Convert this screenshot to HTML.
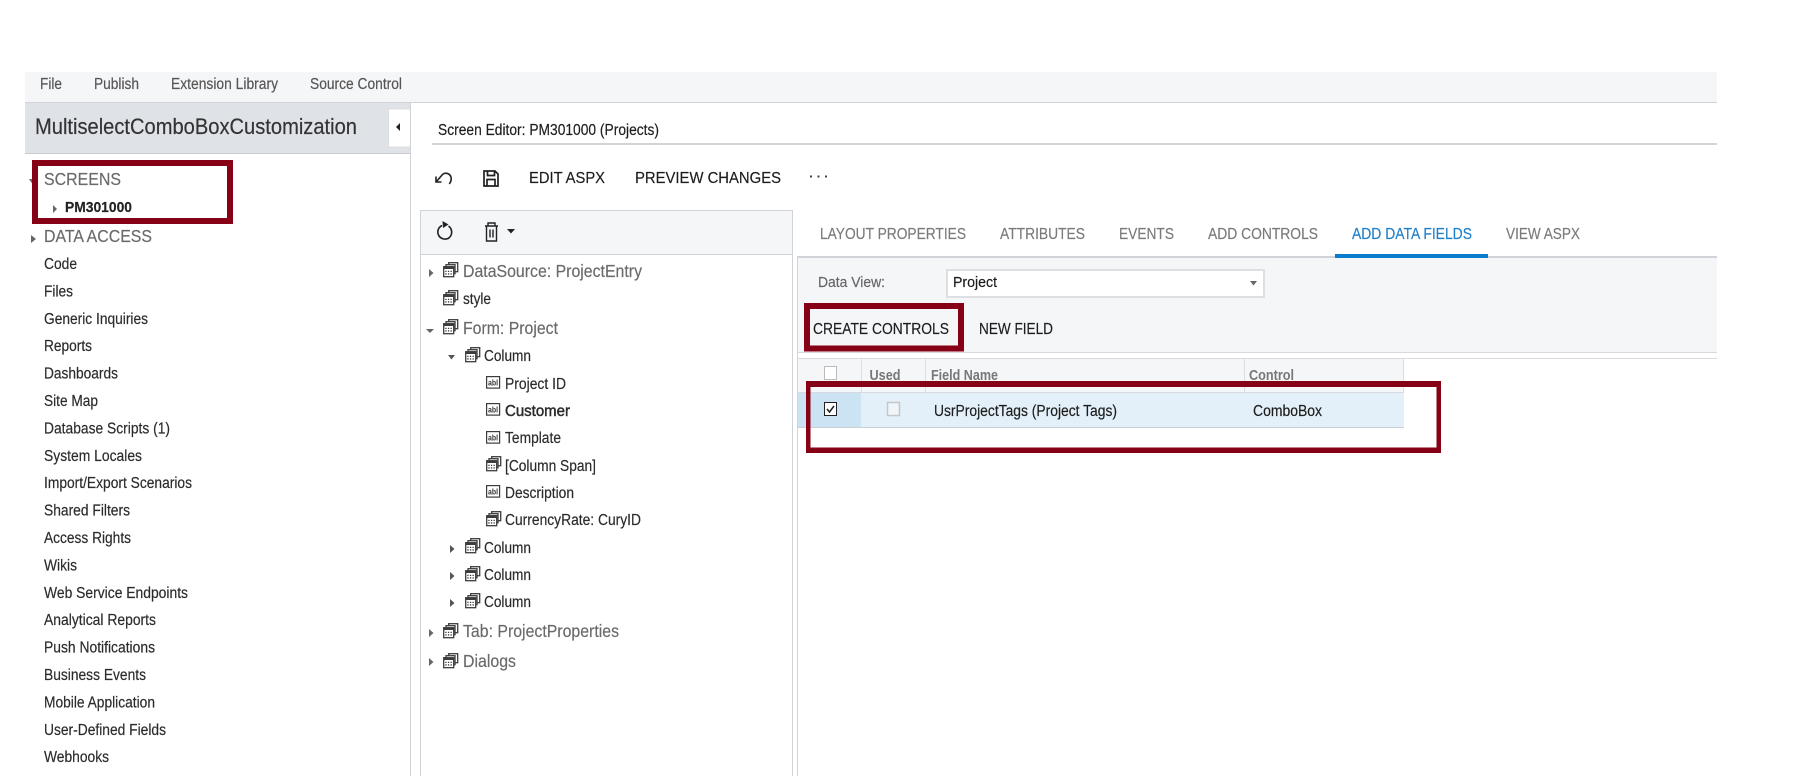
<!DOCTYPE html>
<html lang="en">
<head>
<meta charset="utf-8">
<title>Screen Editor</title>
<style>
html,body{margin:0;padding:0;background:#fff;width:1798px;height:776px;overflow:hidden}
svg{display:block}
text{font-family:"Liberation Sans",sans-serif;font-size:15.5px;color:#2b2b2b;fill:currentColor;stroke:currentColor;stroke-width:.18px}
.m{color:#555}
.g{color:#6a6a6a;font-size:17.5px}
.t{color:#7a7a7a;font-size:16px;transform:translateY(-1px)}
.h{color:#777;font-size:14.500px;font-weight:bold;stroke-width:0}
.d{color:#1d1d1d}
.i{stroke:#3c3c3c;fill:#fff;stroke-width:1.300}
</style>
</head>
<body>
<svg width="1798" height="776" viewBox="0 0 1798 776" xmlns="http://www.w3.org/2000/svg">
<defs>
<g id="st">
<rect class="i" x="5.700" y="0.700" width="9" height="9"/>
<rect class="i" x="3" y="2.700" width="9" height="9"/>
<rect class="i" x="0.700" y="4.700" width="10" height="10"/>
<path d="M0.500 4.500h10.500v2.500h-10.500z" fill="#3c3c3c"/>
<path d="M2.300 8.700h1.300v1.300h-1.300zM4.900 8.700h1.300v1.300h-1.300zM7.500 8.700h1.300v1.300h-1.300zM2.300 11.300h1.300v1.300h-1.300zM4.900 11.300h1.300v1.300h-1.300zM7.500 11.300h1.300v1.300h-1.300z" fill="#3c3c3c"/>
</g>
<g id="ab">
<rect x="0.600" y="0.600" width="13" height="11.500" fill="#fff" stroke="#3c3c3c" stroke-width="1.200"/>
<text x="2" y="9.500" textLength="10" lengthAdjust="spacingAndGlyphs" style="font-size:8.500px;font-weight:bold;color:#333;stroke-width:0">abl</text>
</g>
</defs>

<!-- Top menu -->
<rect x="25" y="72" width="1692" height="30" fill="#f5f6f8"/>
<rect x="25" y="102" width="1692" height="1" fill="#d2d3d8"/>
<text class="m" x="40" y="89" textLength="22" lengthAdjust="spacingAndGlyphs">File</text>
<text class="m" x="94" y="89" textLength="45" lengthAdjust="spacingAndGlyphs">Publish</text>
<text class="m" x="171" y="89" textLength="107" lengthAdjust="spacingAndGlyphs">Extension Library</text>
<text class="m" x="310" y="89" textLength="92" lengthAdjust="spacingAndGlyphs">Source Control</text>

<!-- Sidebar header -->
<rect x="25" y="103" width="385" height="50" fill="#dfe3e7"/>
<rect x="25" y="153" width="385" height="1" fill="#c8cbd0"/>
<text x="35" y="134" textLength="322" lengthAdjust="spacingAndGlyphs" style="font-size:22.500px;color:#333">MultiselectComboBoxCustomization</text>
<rect x="388.500" y="109" width="22" height="38" fill="#fff" stroke="#dcdde2"/>
<path d="M400 123v8l-4-4z" fill="#222"/>

<!-- Vertical dividers -->
<rect x="410" y="103" width="1" height="673" fill="#d2d3d8"/>
<rect x="420" y="210" width="1" height="566" fill="#d2d3d8"/>
<rect x="792" y="210" width="1" height="566" fill="#d2d3d8"/>
<rect x="797" y="257" width="1" height="519" fill="#d2d3d8"/>

<!-- Sidebar tree -->
<path d="M29 179h7l-3.500 5z" fill="#666"/>
<text x="44" y="185" textLength="77" lengthAdjust="spacingAndGlyphs" class="g">SCREENS</text>
<path d="M53 205l4 4-4 4z" fill="#666"/>
<text x="65" y="212" textLength="67" lengthAdjust="spacingAndGlyphs" style="font-weight:bold;color:#222;font-size:15px">PM301000</text>
<path d="M31 235l5 4-5 4z" fill="#666"/>
<text x="44" y="242" textLength="108" lengthAdjust="spacingAndGlyphs" class="g">DATA ACCESS</text>
<text x="44" y="269" textLength="33" lengthAdjust="spacingAndGlyphs">Code</text>
<text x="44" y="296.500" textLength="29" lengthAdjust="spacingAndGlyphs">Files</text>
<text x="44" y="324" textLength="104" lengthAdjust="spacingAndGlyphs">Generic Inquiries</text>
<text x="44" y="351.200" textLength="48" lengthAdjust="spacingAndGlyphs">Reports</text>
<text x="44" y="378.600" textLength="74" lengthAdjust="spacingAndGlyphs">Dashboards</text>
<text x="44" y="406" textLength="54" lengthAdjust="spacingAndGlyphs">Site Map</text>
<text x="44" y="433.400" textLength="126" lengthAdjust="spacingAndGlyphs">Database Scripts (1)</text>
<text x="44" y="460.800" textLength="98" lengthAdjust="spacingAndGlyphs">System Locales</text>
<text x="44" y="488.200" textLength="148" lengthAdjust="spacingAndGlyphs">Import/Export Scenarios</text>
<text x="44" y="515.600" textLength="86" lengthAdjust="spacingAndGlyphs">Shared Filters</text>
<text x="44" y="543" textLength="87" lengthAdjust="spacingAndGlyphs">Access Rights</text>
<text x="44" y="570.400" textLength="33" lengthAdjust="spacingAndGlyphs">Wikis</text>
<text x="44" y="597.800" textLength="144" lengthAdjust="spacingAndGlyphs">Web Service Endpoints</text>
<text x="44" y="625.200" textLength="112" lengthAdjust="spacingAndGlyphs">Analytical Reports</text>
<text x="44" y="652.600" textLength="111" lengthAdjust="spacingAndGlyphs">Push Notifications</text>
<text x="44" y="680" textLength="102" lengthAdjust="spacingAndGlyphs">Business Events</text>
<text x="44" y="707.400" textLength="111" lengthAdjust="spacingAndGlyphs">Mobile Application</text>
<text x="44" y="734.800" textLength="122" lengthAdjust="spacingAndGlyphs">User-Defined Fields</text>
<text x="44" y="762.200" textLength="65" lengthAdjust="spacingAndGlyphs">Webhooks</text>

<!-- Screen editor header -->
<rect x="432" y="143" width="1285" height="2" fill="#d2d3d8"/>
<text class="d" x="438" y="135" textLength="221" lengthAdjust="spacingAndGlyphs">Screen Editor: PM301000 (Projects)</text>

<!-- Toolbar -->
<path d="M436 176.500v5.500h5.500M436.500 181.500l6-7c3-2.500 7-1 8.300 2 .9 2.500.3 5-1.500 7.500" fill="none" stroke="#222" stroke-width="1.600"/>
<path d="M484 171h11l3 3v12h-14zM487.500 171v4.500h7v-4.500M487 186v-6.500h8v6.500" fill="none" stroke="#222" stroke-width="1.700"/>
<text class="d" x="529" y="183" textLength="76" lengthAdjust="spacingAndGlyphs" style="font-size:16px">EDIT ASPX</text>
<text class="d" x="635" y="183" textLength="146" lengthAdjust="spacingAndGlyphs" style="font-size:16px">PREVIEW CHANGES</text>
<path d="M810 175.500h2v2h-2zM817.500 175.500h2v2h-2zM825 175.500h2v2h-2z" fill="#444"/>

<!-- Tree panel -->
<rect x="420.500" y="210.500" width="372" height="44" fill="#f5f6f8" stroke="#d2d3d8"/>
<path d="M442 225.500c-4 2-5 6-3.500 9.500 1.500 3.500 6 5 9.500 3.500 3.500-2 4.500-6 3-9.500-.6-1.300-1.500-2.300-2.500-3" fill="none" stroke="#222" stroke-width="1.600"/>
<path d="M442.500 221l6 3.500-5.500 3.500z" fill="#222"/>
<path d="M485 226h13M488 226v-3h7v3M486.500 226v15h10v-15M490 229.500v8M493 229.500v8" fill="none" stroke="#222" stroke-width="1.400"/>
<path d="M507 229h8l-4 4.500z" fill="#222"/>

<!-- Tree -->
<path d="M429 269l4.500 4-4.500 4z" fill="#666"/>
<use href="#st" x="443" y="262"/>
<text x="463" y="277" textLength="179" lengthAdjust="spacingAndGlyphs" class="g">DataSource: ProjectEntry</text>
<use href="#st" x="443" y="290"/>
<text x="463" y="304" textLength="28" lengthAdjust="spacingAndGlyphs">style</text>
<path d="M426 329h8l-4 4z" fill="#666"/>
<use href="#st" x="443" y="319"/>
<text x="463" y="334" textLength="95" lengthAdjust="spacingAndGlyphs" class="g">Form: Project</text>
<path d="M448 355h7l-3.500 4.500z" fill="#555"/>
<use href="#st" x="465" y="347"/>
<text x="484" y="361" textLength="47" lengthAdjust="spacingAndGlyphs">Column</text>
<use href="#ab" x="486" y="376"/>
<text x="505" y="389" textLength="61" lengthAdjust="spacingAndGlyphs">Project ID</text>
<use href="#ab" x="486" y="403"/>
<text x="505" y="416" textLength="65" lengthAdjust="spacingAndGlyphs" style="stroke-width:.45px">Customer</text>
<use href="#ab" x="486" y="431"/>
<text x="505" y="443" textLength="56" lengthAdjust="spacingAndGlyphs">Template</text>
<use href="#st" x="486" y="456"/>
<text x="505" y="471" textLength="91" lengthAdjust="spacingAndGlyphs">[Column Span]</text>
<use href="#ab" x="486" y="485"/>
<text x="505" y="498" textLength="69" lengthAdjust="spacingAndGlyphs">Description</text>
<use href="#st" x="486" y="511"/>
<text x="505" y="525" textLength="136" lengthAdjust="spacingAndGlyphs">CurrencyRate: CuryID</text>
<path d="M450 545l4.500 4-4.500 4z" fill="#555"/>
<use href="#st" x="465" y="538"/>
<text x="484" y="553" textLength="47" lengthAdjust="spacingAndGlyphs">Column</text>
<path d="M450 572l4.500 4-4.500 4z" fill="#555"/>
<use href="#st" x="465" y="566"/>
<text x="484" y="580" textLength="47" lengthAdjust="spacingAndGlyphs">Column</text>
<path d="M450 599l4.500 4-4.500 4z" fill="#555"/>
<use href="#st" x="465" y="593"/>
<text x="484" y="607" textLength="47" lengthAdjust="spacingAndGlyphs">Column</text>
<path d="M429 629l4.500 4-4.500 4z" fill="#666"/>
<use href="#st" x="443" y="623"/>
<text x="463" y="637" textLength="156" lengthAdjust="spacingAndGlyphs" class="g">Tab: ProjectProperties</text>
<path d="M429 658l4.500 4-4.500 4z" fill="#666"/>
<use href="#st" x="443" y="653"/>
<text x="463" y="667" textLength="53" lengthAdjust="spacingAndGlyphs" class="g">Dialogs</text>

<!-- Tabs -->
<text class="t" x="820" y="240" textLength="146" lengthAdjust="spacingAndGlyphs">LAYOUT PROPERTIES</text>
<text class="t" x="1000" y="240" textLength="85" lengthAdjust="spacingAndGlyphs">ATTRIBUTES</text>
<text class="t" x="1119" y="240" textLength="55" lengthAdjust="spacingAndGlyphs">EVENTS</text>
<text class="t" x="1208" y="240" textLength="110" lengthAdjust="spacingAndGlyphs">ADD CONTROLS</text>
<text class="t" x="1352" y="240" textLength="120" lengthAdjust="spacingAndGlyphs" style="color:#1f7fc9">ADD DATA FIELDS</text>
<text class="t" x="1506" y="240" textLength="74" lengthAdjust="spacingAndGlyphs">VIEW ASPX</text>

<!-- Form panel -->
<rect x="798" y="258" width="919" height="94" fill="#f5f6f8"/>
<rect x="797" y="256" width="920" height="2" fill="#d2d3d8"/>
<rect x="1335" y="254" width="153" height="4" fill="#0a7acb"/>
<rect x="797" y="352" width="920" height="1" fill="#d8d9dd"/>
<rect x="797" y="358" width="920" height="1" fill="#d8d9dd"/>
<text x="818" y="287" textLength="67" lengthAdjust="spacingAndGlyphs" style="color:#666;font-size:15px">Data View:</text>
<rect x="947" y="270" width="317" height="27" fill="#fff" stroke="#dedfe3" stroke-width="2"/>
<text class="d" x="953" y="287" textLength="44" lengthAdjust="spacingAndGlyphs" style="font-size:15px">Project</text>
<path d="M1250 281h7l-3.500 4.500z" fill="#666"/>

<text class="d" x="813" y="334" textLength="136" lengthAdjust="spacingAndGlyphs" style="font-size:16px">CREATE CONTROLS</text>
<text class="d" x="979" y="334" textLength="74" lengthAdjust="spacingAndGlyphs" style="font-size:16px">NEW FIELD</text>

<!-- Grid -->
<rect x="798" y="359" width="605" height="33" fill="#f5f6f8"/>
<rect x="861" y="359" width="1" height="33" fill="#dcdde1"/>
<rect x="925" y="359" width="1" height="33" fill="#dcdde1"/>
<rect x="1244" y="359" width="1" height="33" fill="#dcdde1"/>
<rect x="1403" y="359" width="1" height="33" fill="#dcdde1"/>
<rect x="798" y="392" width="606" height="1" fill="#d6d9dd"/>
<rect x="824.500" y="366.500" width="12" height="13" fill="#fff" stroke="#bbb"/>
<text class="h" x="869.500" y="380" textLength="31" lengthAdjust="spacingAndGlyphs">Used</text>
<text class="h" x="931" y="380" textLength="67" lengthAdjust="spacingAndGlyphs">Field Name</text>
<text class="h" x="1249" y="380" textLength="45" lengthAdjust="spacingAndGlyphs">Control</text>
<rect x="798" y="393" width="606" height="34" fill="#e3f0f9"/>
<rect x="798" y="393" width="63" height="34" fill="#cbe3f3"/>
<rect x="798" y="427" width="606" height="1" fill="#c9d0d8"/>
<rect x="824.500" y="402.500" width="12" height="13" fill="#fff" stroke="#222"/>
<path d="M827 409l2.500 3 4.500-6" fill="none" stroke="#222" stroke-width="1.500"/>
<rect x="887.500" y="402.500" width="12" height="13" fill="#f0f5f9" stroke="#c4c6ca" stroke-width="1.500"/>
<text class="d" x="934" y="416" textLength="183" lengthAdjust="spacingAndGlyphs">UsrProjectTags (Project Tags)</text>
<text class="d" x="1253" y="416" textLength="69" lengthAdjust="spacingAndGlyphs">ComboBox</text>

<!-- Red annotation boxes -->
<rect x="35" y="163" width="195" height="58" fill="none" stroke="#860016" stroke-width="6"/>
<rect x="807" y="306" width="154" height="42.500" fill="none" stroke="#860016" stroke-width="6"/>
<path d="M806 381h635v72h-635zM810.500 387v60.500h626v-60.500z" fill="#860016" fill-rule="evenodd"/>
</svg>
</body>
</html>
